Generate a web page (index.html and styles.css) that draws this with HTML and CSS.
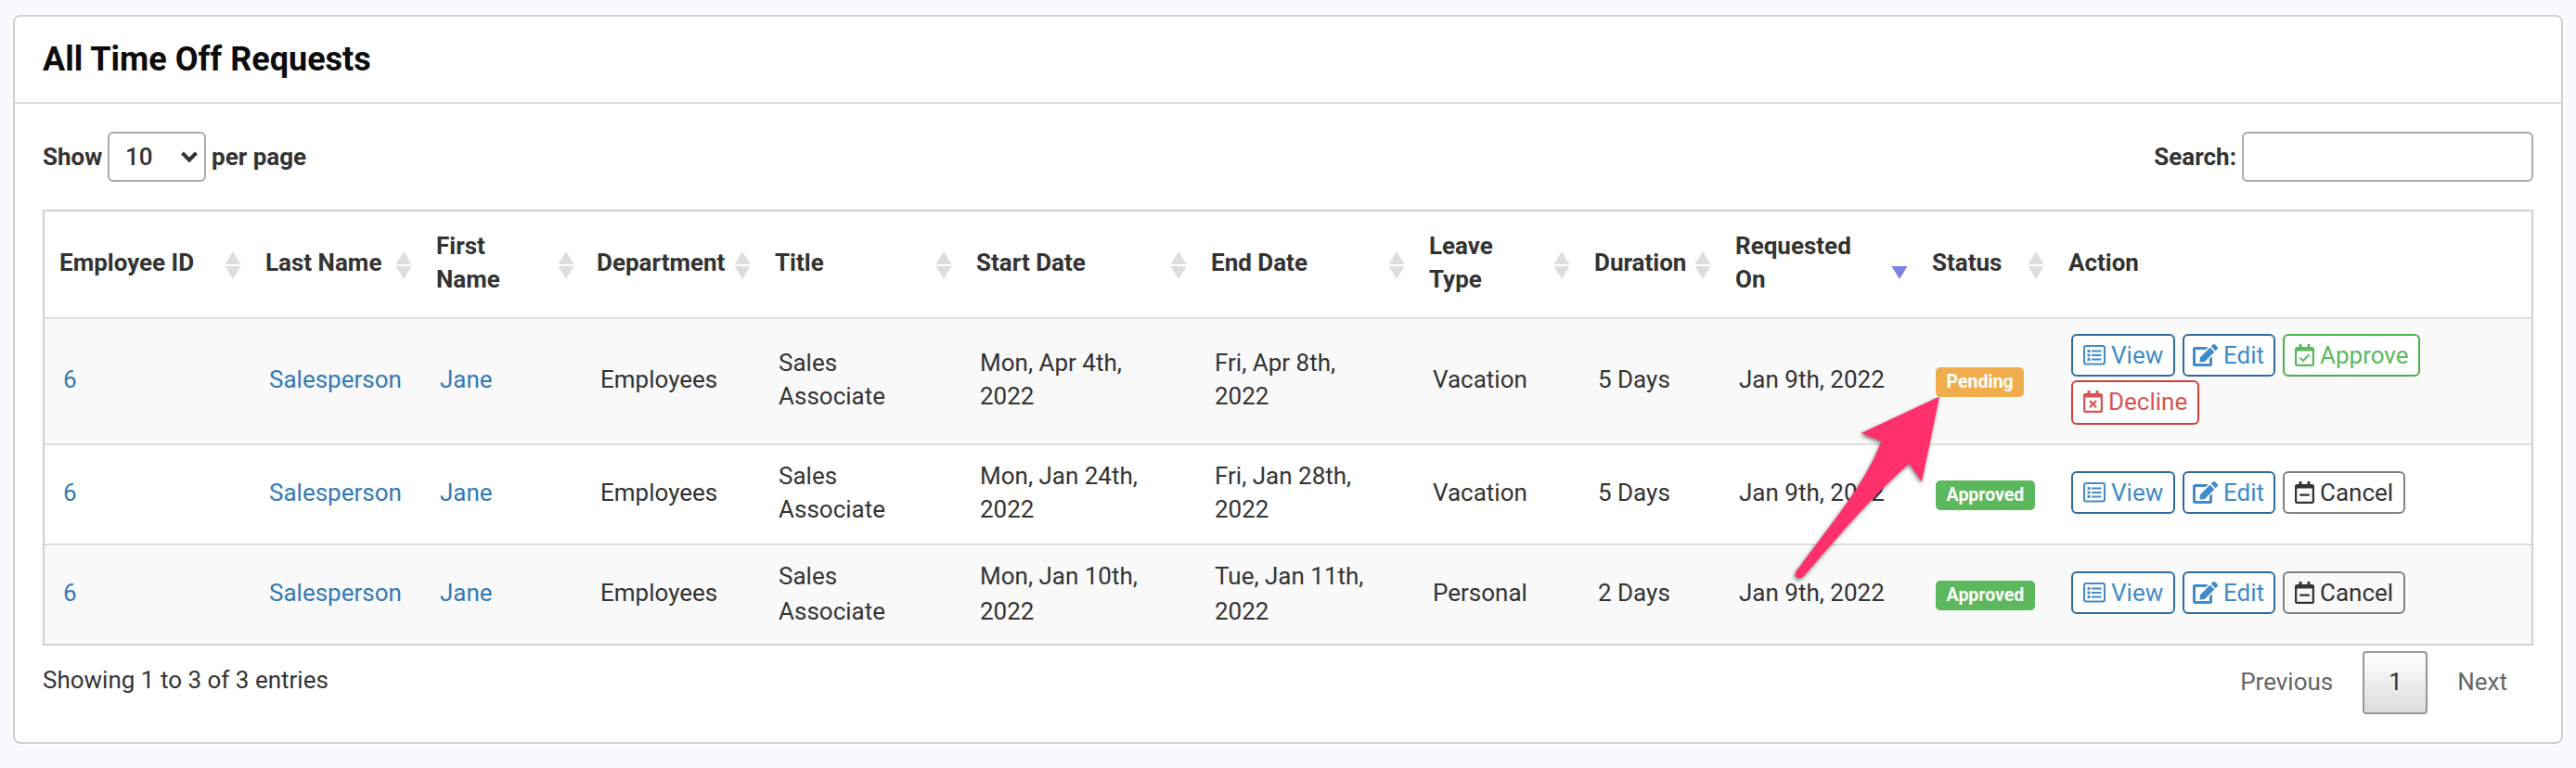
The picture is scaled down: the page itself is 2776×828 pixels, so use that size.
FILE: index.html
```html
<!DOCTYPE html>
<html lang="en">
<head>
<meta charset="utf-8">
<title>All Time Off Requests</title>
<link rel="stylesheet" href="styles.css">
</head>
<body>
<svg class="sprite" aria-hidden="true">
  <symbol id="i-list" viewBox="0 0 24 22">
    <rect x="1" y="1" width="22" height="19.6" rx="2" fill="none" stroke="currentColor" stroke-width="2"/>
    <path d="M9 6.5h10.500M9 11h10.500M9 15.500h10.500" fill="none" stroke="currentColor" stroke-width="2"/>
    <path d="M4.500 6.500h3M4.500 11h3M4.500 15.500h3" fill="none" stroke="currentColor" stroke-width="2.800"/>
  </symbol>
  <symbol id="i-edit" viewBox="0 0 576 512">
    <path fill="currentColor" d="M402.600 83.200l90.200 90.200c3.800 3.800 3.800 10 0 13.800L274.400 405.600l-92.800 10.300c-12.400 1.400-22.900-9.100-21.500-21.500l10.300-92.800L388.800 83.200c3.800-3.800 10-3.800 13.800 0zm162-22.900l-48.800-48.800c-15.200-15.200-39.900-15.200-55.200 0l-35.400 35.400c-3.800 3.800-3.800 10 0 13.800l90.200 90.200c3.800 3.800 10 3.800 13.800 0l35.400-35.400c15.200-15.300 15.200-40 0-55.200zM384 346.200V448H64V128h229.800c3.200 0 6.200-1.300 8.500-3.500l40-40c7.600-7.600 2.200-20.500-8.500-20.500H48C21.500 64 0 85.500 0 112v352c0 26.500 21.500 48 48 48h352c26.500 0 48-21.500 48-48V306.200c0-10.700-12.900-16-20.500-8.500l-40 40c-2.200 2.300-3.500 5.300-3.500 8.500z"/>
  </symbol>
  <symbol id="i-cal" viewBox="0 0 448 512">
    <path fill="currentColor" fill-rule="evenodd" d="M400 64h-48V12c0-6.600-5.400-12-12-12h-40c-6.600 0-12 5.400-12 12v52H160V12c0-6.600-5.400-12-12-12h-40c-6.600 0-12 5.400-12 12v52H48C21.500 64 0 85.500 0 112v352c0 26.500 21.500 48 48 48h352c26.500 0 48-21.500 48-48V112c0-26.500-21.500-48-48-48zm-6 400H54c-3.300 0-6-2.700-6-6V160h352v298c0 3.300-2.700 6-6 6z"/>
  </symbol>
  <symbol id="i-approve" viewBox="0 0 448 512">
    <use href="#i-cal"/>
    <path d="M118 312l72 72 142-142" fill="none" stroke="currentColor" stroke-width="44"/>
  </symbol>
  <symbol id="i-decline" viewBox="0 0 448 512">
    <use href="#i-cal"/>
    <path d="M148 236l152 152M300 236L148 388" fill="none" stroke="currentColor" stroke-width="48"/>
  </symbol>
  <symbol id="i-cancel" viewBox="0 0 448 512">
    <use href="#i-cal"/>
    <path d="M112 312h224" fill="none" stroke="currentColor" stroke-width="48"/>
  </symbol>
  <symbol id="i-sort" viewBox="0 0 18 30">
    <path d="M9 0l8.500 14H.5zM9 30l8.500-14H.5z" fill="#ddd"/>
  </symbol>
  <symbol id="i-desc" viewBox="0 0 18 30">
    <path d="M9 30l8.500-14H.5z" fill="#7c80e0"/>
  </symbol>
</svg>

<main class="panel">
  <header class="panel-head"><h1>All Time Off Requests</h1></header>
  <div class="panel-body">
    <div class="controls">
      <label class="length"><span class="show">Show</span>
        <span class="select">10<svg class="chev" viewBox="0 0 18 12"><path d="M1.500 1.800L9 9.500l7.500-7.700" fill="none" stroke="currentColor" stroke-width="4"/></svg></span>
        per page</label>
      <label class="search">Search: <input type="text"></label>
    </div>

    <table class="requests">
      <colgroup>
        <col class="c1"><col class="c2"><col class="c3"><col class="c4"><col class="c5"><col class="c6"><col class="c7"><col class="c8"><col class="c9"><col class="c10"><col class="c11"><col class="c12">
      </colgroup>
      <thead>
        <tr>
          <th><div class="th">Employee ID<svg class="sort"><use href="#i-sort"/></svg></div></th>
          <th><div class="th">Last Name<svg class="sort"><use href="#i-sort"/></svg></div></th>
          <th><div class="th">First<br>Name<svg class="sort near"><use href="#i-sort"/></svg></div></th>
          <th><div class="th">Department<svg class="sort"><use href="#i-sort"/></svg></div></th>
          <th><div class="th">Title<svg class="sort"><use href="#i-sort"/></svg></div></th>
          <th><div class="th">Start Date<svg class="sort"><use href="#i-sort"/></svg></div></th>
          <th><div class="th">End Date<svg class="sort"><use href="#i-sort"/></svg></div></th>
          <th><div class="th">Leave<br>Type<svg class="sort"><use href="#i-sort"/></svg></div></th>
          <th><div class="th">Duration<svg class="sort"><use href="#i-sort"/></svg></div></th>
          <th><div class="th">Requested<br>On<svg class="sort"><use href="#i-desc"/></svg></div></th>
          <th><div class="th">Status<svg class="sort"><use href="#i-sort"/></svg></div></th>
          <th><div class="th">Action</div></th>
        </tr>
      </thead>
      <tbody>
        <tr class="tall">
          <td><a>6</a></td><td><a>Salesperson</a></td><td><a>Jane</a></td><td>Employees</td><td>Sales<br>Associate</td>
          <td>Mon, Apr 4th,<br>2022</td><td>Fri, Apr 8th,<br>2022</td><td>Vacation</td><td>5 Days</td><td>Jan 9th, 2022</td>
          <td class="status"><span class="badge pending">Pending</span></td>
          <td><div class="actions">
            <span class="btn view"><svg class="list"><use href="#i-list"/></svg>View</span>
            <span class="btn edit"><svg class="pen"><use href="#i-edit"/></svg>Edit</span>
            <span class="btn approve"><svg class="cal"><use href="#i-approve"/></svg>Approve</span>
            <span class="btn decline"><svg class="cal"><use href="#i-decline"/></svg>Decline</span>
          </div></td>
        </tr>
        <tr>
          <td><a>6</a></td><td><a>Salesperson</a></td><td><a>Jane</a></td><td>Employees</td><td>Sales<br>Associate</td>
          <td>Mon, Jan 24th,<br>2022</td><td>Fri, Jan 28th,<br>2022</td><td>Vacation</td><td>5 Days</td><td>Jan 9th, 2022</td>
          <td class="status"><span class="badge approved">Approved</span></td>
          <td><div class="actions">
            <span class="btn view"><svg class="list"><use href="#i-list"/></svg>View</span>
            <span class="btn edit"><svg class="pen"><use href="#i-edit"/></svg>Edit</span>
            <span class="btn cancel"><svg class="cal"><use href="#i-cancel"/></svg>Cancel</span>
          </div></td>
        </tr>
        <tr>
          <td><a>6</a></td><td><a>Salesperson</a></td><td><a>Jane</a></td><td>Employees</td><td class="loose">Sales<br>Associate</td>
          <td class="loose">Mon, Jan 10th,<br>2022</td><td class="loose">Tue, Jan 11th,<br>2022</td><td>Personal</td><td>2 Days</td><td>Jan 9th, 2022</td>
          <td class="status"><span class="badge approved">Approved</span></td>
          <td><div class="actions">
            <span class="btn view"><svg class="list"><use href="#i-list"/></svg>View</span>
            <span class="btn edit"><svg class="pen"><use href="#i-edit"/></svg>Edit</span>
            <span class="btn cancel"><svg class="cal"><use href="#i-cancel"/></svg>Cancel</span>
          </div></td>
        </tr>
      </tbody>
    </table>

    <footer class="foot">
      <div class="info">Showing 1 to 3 of 3 entries</div>
      <nav class="pages"><span class="page muted">Previous</span><span class="page current">1</span><span class="page muted">Next</span></nav>
    </footer>
  </div>
</main>

<svg class="arrow" viewBox="0 0 400 320">
  <path d="M210 87.500L125.500 127l22 8.700C130 182 92 226 56 275.500C51.500 282 59 286.500 64 281C98 242 138 194 177.500 159.700L191 179.500z" fill="#ff306c"/>
</svg>
</body>
</html>
```
FILE: styles.css
```css
* { box-sizing: border-box; }
body {
  margin: 0;
  padding: 16px 14px;
  height: 828px;
  overflow: hidden;
  background: #f8f9fe;
  color: #333;
  font: 26px/36px Roboto, sans-serif;
}
.sprite { position: absolute; width: 0; height: 0; }
.panel {
  height: 786px;
  background: #fff;
  border: 2px solid #d0d0d0;
  border-radius: 8px;
  box-shadow: 0 0 0 2px #fff;
}
.panel-head {
  height: 94px;
  padding: 0 30px;
  border-bottom: 2px solid #ddd;
  display: flex;
  align-items: center;
}
h1 { margin: 0; font-size: 36px; font-weight: 700; color: #0c0c0c; line-height: 40px; }
.panel-body { padding: 30px 30px 0; }
.controls { display: flex; justify-content: space-between; height: 54px; font-weight: 700; }
.length, .search { display: flex; align-items: center; gap: 6px; }
.show { width: 64px; }
.select {
  width: 106px;
  height: 54px;
  padding: 0 7px 0 17px;
  border: 2px solid #aaa;
  border-radius: 6px;
  display: flex;
  align-items: center;
  justify-content: space-between;
  font-weight: 500;
}
.chev { width: 18px; height: 12px; }
.search input {
  width: 314px;
  height: 54px;
  border: 2px solid #aaa;
  border-radius: 6px;
  background: transparent;
  font: inherit;
}
.requests {
  width: 2684px;
  margin-top: 30px;
  border: 2px solid #d0d0d0;
  border-collapse: separate;
  border-spacing: 0;
  table-layout: fixed;
}
.c1 { width: 222px; }
.c2 { width: 184px; }
.c3 { width: 173px; }
.c4 { width: 192px; }
.c5 { width: 217px; }
.c6 { width: 253px; }
.c7 { width: 235px; }
.c8 { width: 178px; }
.c9 { width: 152px; }
.c10 { width: 212px; }
.c11 { width: 147px; }
th { height: 116px; padding: 0 0 5px; text-align: left; font-weight: 700; border-bottom: 2px solid #ddd; }
.th { position: relative; padding-left: 16px; white-space: nowrap; }
.sort { position: absolute; right: 10px; top: 50%; margin-top: -12px; width: 18px; height: 30px; }
.near { right: 8px; }
td { height: 108px; padding: 0 0 4px 20px; border-bottom: 2px solid #ddd; white-space: nowrap; }
.tall td { height: 136px; }
tbody tr:nth-child(odd) { background: #f9f9f9; }
tbody tr:last-child td { height: 106px; border-bottom: 0; }
td.loose { line-height: 38px; padding-bottom: 2px; }
td.status { padding-bottom: 0; }
a { color: #337ab7; }
.badge {
  display: block;
  width: fit-content;
  height: 32px;
  margin-top: 2px;
  padding: 0 11.6px;
  border-radius: 5px;
  color: #fff;
  font-size: 19.5px;
  font-weight: 700;
  line-height: 32px;
}
.pending { background: #f0ad4e; }
.approved { background: #5cb85c; }
.actions { display: flex; flex-wrap: wrap; gap: 4px 8px; width: 420px; margin-left: -1px; }
.btn {
  display: flex;
  align-items: center;
  height: 46px;
  padding-left: 11px;
  border: 2px solid;
  border-radius: 6px;
  background: #fff;
  gap: 6px;
}
.view { width: 112px; color: #428bca; border-color: #2d6ca2; }
.edit { width: 100px; color: #428bca; border-color: #2d6ca2; padding-left: 9px; }
.approve { width: 148px; color: #5cb85c; border-color: #4cae4c; }
.decline { width: 138px; height: 48px; padding-bottom: 2px; color: #d9534f; border-color: #d43f3a; }
.cancel { width: 132px; color: #333; border-color: #808080; background: transparent; }
.list { width: 24px; height: 22px; }
.pen { width: 27px; height: 24px; }
.cal { width: 21px; height: 24px; }
.foot { display: flex; justify-content: space-between; padding-top: 6px; }
.info { padding-top: 13px; }
.pages { display: flex; gap: 4px; }
.page { height: 68px; padding: 0 26px; line-height: 63px; border: 2px solid transparent; border-radius: 4px; }
.muted { color: #666; }
.current { width: 70px; border-color: #979797; background: linear-gradient(#fff, #dcdcdc); }
.arrow {
  position: absolute;
  left: 1880px;
  top: 340px;
  width: 400px;
  height: 320px;
  filter: drop-shadow(-1px 2px 2px rgba(0, 0, 0, .5));
}
```
